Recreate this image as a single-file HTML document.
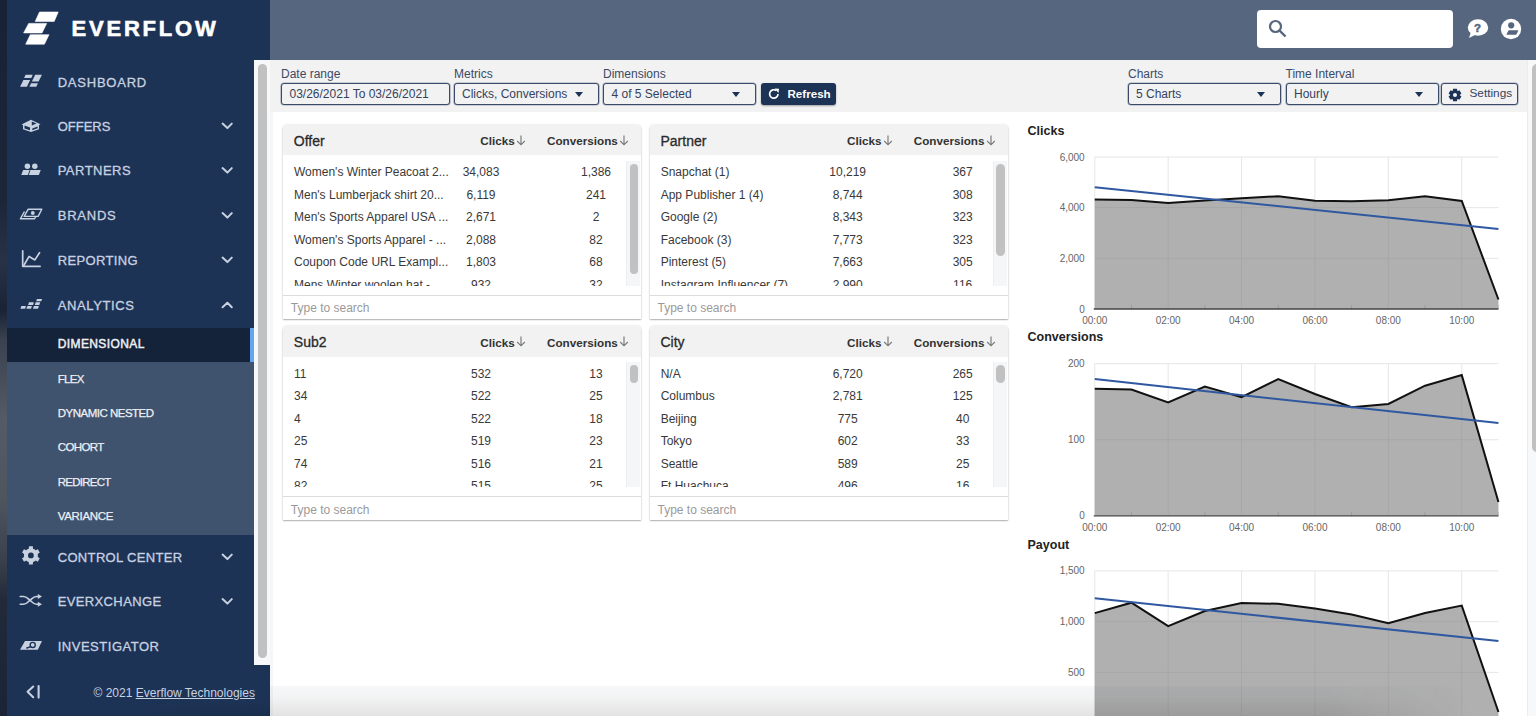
<!DOCTYPE html><html><head><meta charset="utf-8"><style>

*{box-sizing:border-box;margin:0;padding:0}
html,body{width:1536px;height:716px;overflow:hidden;background:#fff;font-family:"Liberation Sans",sans-serif;position:relative}
.a{position:absolute}
.t{position:absolute;white-space:nowrap;line-height:1}
#strip{left:0;top:0;width:7px;height:716px;background:linear-gradient(180deg,#172236 0px,#1b2639 200px,#283246 260px,#1a2336 310px,#3a4250 340px,#545b66 420px,#4e555f 500px,#3a414d 560px,#222a3a 600px,#1a2436 716px)}
#side{left:7px;top:0;width:263px;height:716px;background:#1d3355}
.nav{position:absolute;left:57.7px;font-size:13px;letter-spacing:0.55px;color:#c8d1e0;-webkit-text-stroke:0.3px #c8d1e0;white-space:nowrap;line-height:1}
.sub{position:absolute;left:57.7px;font-size:11.5px;color:#eef0f4;-webkit-text-stroke:0.25px #eef0f4;white-space:nowrap;line-height:1}
.chev{position:absolute;left:216px;width:12px;height:8px}
#hdr{left:270px;top:0;width:1266px;height:60px;background:#56667f}
#main{left:270px;top:60px;width:1257px;height:656px;background:#fff}
#fbar{left:270px;top:60px;width:1257px;height:52px;background:#f2f2f2}
.lbl{position:absolute;font-size:12px;color:#3b4a66;line-height:1;white-space:nowrap}
.inp{position:absolute;top:83px;height:22px;border:1px solid #3a4a68;box-shadow:0 0 0 0.6px rgba(58,74,104,.45);border-radius:3px;font-size:12px;color:#34425e;line-height:21px;padding-left:7.5px;white-space:nowrap;background:#f2f2f2}
.caret{position:absolute;top:7.5px;width:0;height:0;border-left:4.6px solid transparent;border-right:4.6px solid transparent;border-top:5.2px solid #1d3355}


.card{position:absolute;width:358px;height:194px;background:#fff;border-radius:4px 4px 0 0;box-shadow:0 1px 1.5px rgba(0,0,0,.28),0 0 2.5px rgba(0,0,0,.14);overflow:hidden}
.ch{position:absolute;left:0;top:0;width:358px;height:30.5px;background:#f2f2f2}
.ct{position:absolute;left:10.5px;top:9px;font-size:14px;color:#2a2a2a;-webkit-text-stroke:0.3px #2a2a2a;line-height:1;white-space:nowrap}
.hc{position:absolute;top:10.5px;font-size:11.7px;font-weight:bold;color:#333;line-height:1;white-space:nowrap}
.arr{position:absolute;top:10px;width:10px;height:12px}
.body{position:absolute;left:0;top:36px;width:358px;height:125px;overflow:hidden}
.r{position:absolute;font-size:12px;color:#393939;line-height:1;white-space:nowrap}
.nm{left:10.7px}
.cv{width:80px;text-align:center}
.trk{position:absolute;left:342.5px;top:36px;width:14px;height:125px;background:#f5f6f8;border-left:1px solid #eceef1}
.thm{position:absolute;left:346.3px;width:8.6px;background:#c1c1c1;border-radius:5px}
.srch{position:absolute;left:0;top:170px;width:358px;height:24px;border-top:1px solid #dcdcdc}
.ph{position:absolute;left:7.5px;top:6.5px;font-size:12px;color:#9a9a9a;line-height:1;white-space:nowrap}


#rtrk{left:1527px;top:60px;width:9px;height:656px;background:#f7f8fa;border-left:1px solid #ececec}
#rthm{left:1532px;top:63.6px;width:10px;height:388px;background:#c1c1c1;border-radius:5px}
#bov{left:270px;top:685.5px;width:1200px;height:31px;background:linear-gradient(180deg,rgba(40,60,100,.04) 0%,rgba(20,30,50,.05) 35%,rgba(0,0,0,.08) 65%,rgba(0,0,0,.115) 100%);-webkit-mask-image:linear-gradient(90deg,#000 0%,#000 88%,transparent 100%);border-top-right-radius:40px}

</style></head><body>
<div id="strip" class="a"></div>
<div id="side" class="a"></div>
<svg class="a" style="left:22px;top:11px" width="38" height="35" viewBox="0 0 38 35">
<polygon points="17.5,1 36.2,1 32.2,10.4 13.2,10.4" fill="#fff" stroke="#fff" stroke-width="0.6" stroke-linejoin="round"/>
<polygon points="6.7,12.4 24.7,12.4 20,21.9 1.65,21.9" fill="#fff" stroke="#fff" stroke-width="0.6" stroke-linejoin="round"/>
<polygon points="8.3,23.7 27,23.7 22.4,33.2 3.7,33.2" fill="#fff" stroke="#fff" stroke-width="0.6" stroke-linejoin="round"/>
</svg>
<div class="t" style="left:71.5px;top:18px;font-size:22px;font-weight:bold;color:#fff;letter-spacing:2.8px;-webkit-text-stroke:0.6px #fff">EVERFLOW</div>
<div class="nav" style="top:76px;letter-spacing:0.77px">DASHBOARD</div>
<div class="nav" style="top:119.5px;letter-spacing:0.0px">OFFERS</div>
<svg class="a" style="left:0;top:0" width="240" height="716" viewBox="0 0 240 716"><polyline points="222.55,123.60 227.4,128.10 231.8,123.60" fill="none" stroke="#c8d1e0" stroke-width="2" stroke-linecap="round" stroke-linejoin="round"/></svg>
<div class="nav" style="top:164px;letter-spacing:0.48px">PARTNERS</div>
<svg class="a" style="left:0;top:0" width="240" height="716" viewBox="0 0 240 716"><polyline points="222.55,168.10 227.4,172.60 231.8,168.10" fill="none" stroke="#c8d1e0" stroke-width="2" stroke-linecap="round" stroke-linejoin="round"/></svg>
<div class="nav" style="top:209px;letter-spacing:0.77px">BRANDS</div>
<svg class="a" style="left:0;top:0" width="240" height="716" viewBox="0 0 240 716"><polyline points="222.55,213.10 227.4,217.60 231.8,213.10" fill="none" stroke="#c8d1e0" stroke-width="2" stroke-linecap="round" stroke-linejoin="round"/></svg>
<div class="nav" style="top:253.5px;letter-spacing:0.37px">REPORTING</div>
<svg class="a" style="left:0;top:0" width="240" height="716" viewBox="0 0 240 716"><polyline points="222.55,257.60 227.4,262.10 231.8,257.60" fill="none" stroke="#c8d1e0" stroke-width="2" stroke-linecap="round" stroke-linejoin="round"/></svg>
<div class="nav" style="top:298.6px;letter-spacing:0.62px">ANALYTICS</div>
<svg class="a" style="left:0;top:0" width="240" height="716" viewBox="0 0 240 716"><polyline points="222.55,307.20 227.4,302.70 231.8,307.20" fill="none" stroke="#c8d1e0" stroke-width="2" stroke-linecap="round" stroke-linejoin="round"/></svg>
<div class="a" style="left:7px;top:328px;width:247px;height:34px;background:#15233a"></div>
<div class="a" style="left:250px;top:328px;width:4px;height:34px;background:#62a6f0"></div>
<div class="a" style="left:7px;top:362px;width:247px;height:173px;background:#3f526e"></div>
<div class="sub" style="top:337.7px;letter-spacing:0.4px;font-size:12px;-webkit-text-stroke:0.45px #eef0f4">DIMENSIONAL</div>
<div class="sub" style="top:373.8px;letter-spacing:-0.7px">FLEX</div>
<div class="sub" style="top:407.8px;letter-spacing:-0.5px">DYNAMIC NESTED</div>
<div class="sub" style="top:441.8px;letter-spacing:-0.6px">COHORT</div>
<div class="sub" style="top:476.8px;letter-spacing:-0.75px">REDIRECT</div>
<div class="sub" style="top:511.29999999999995px;letter-spacing:-0.3px">VARIANCE</div>
<div class="nav" style="top:550.5px;letter-spacing:0.34px">CONTROL CENTER</div>
<svg class="a" style="left:0;top:0" width="240" height="716" viewBox="0 0 240 716"><polyline points="222.55,554.60 227.4,559.10 231.8,554.60" fill="none" stroke="#c8d1e0" stroke-width="2" stroke-linecap="round" stroke-linejoin="round"/></svg>
<div class="nav" style="top:595px;letter-spacing:0.37px">EVERXCHANGE</div>
<svg class="a" style="left:0;top:0" width="240" height="716" viewBox="0 0 240 716"><polyline points="222.55,599.10 227.4,603.60 231.8,599.10" fill="none" stroke="#c8d1e0" stroke-width="2" stroke-linecap="round" stroke-linejoin="round"/></svg>
<div class="nav" style="top:640px;letter-spacing:0.52px">INVESTIGATOR</div>
<div class="t" style="left:93.5px;top:687px;font-size:12px;color:#c8d1e0">&copy; 2021 <span style="text-decoration:underline">Everflow Technologies</span></div>
<svg class="a" style="left:0;top:0" width="50" height="716" viewBox="0 0 50 716">
<g fill="#c8d1e0">
<polygon points="25.6,74.8 32.7,74.8 31.3,78.0 24.1,78.0"/>
<polygon points="35.2,74.8 41.9,74.8 38.6,81.6 31.9,81.6"/>
<polygon points="23.4,80.1 30.1,80.1 26.9,86.8 20.1,86.8"/>
<polygon points="31.1,83.3 37.9,83.3 36.3,86.8 29.4,86.8"/>
</g>
<path d="M21.5,124.5 L31,119.8 L40.5,124.3 L39,125 L39,129.2 L31,132 L23,129.2 L23,125 Z" fill="#c8d1e0"/>
<g fill="#1d3355">
<polygon points="24.5,125.6 30,127.6 30,130.3 24.5,128.4"/>
<polygon points="32.3,128.6 37.6,126.6 37.6,128.3 32.3,130.2"/>
<polygon points="31.8,121.6 36.5,123.5 31.8,125.4"/>
</g>
<g fill="#c8d1e0">
<circle cx="27.4" cy="166.2" r="2.75"/><circle cx="34.8" cy="166.2" r="2.75"/>
<polygon points="23.2,170.1 29.6,170.1 27.9,174.9 21.2,174.9"/>
<polygon points="30.4,170.1 40.8,170.1 38.8,174.9 28.9,174.9"/>
</g>
<g fill="none" stroke="#c8d1e0" stroke-width="1.4" stroke-linejoin="round">
<polygon points="28.2,209.2 41.8,209.2 38.1,216.4 24.2,216.4"/>
<path d="M24.5,211.5 L20.4,218.8 L34.4,218.8 L36,216.4"/>
</g>
<circle cx="32.8" cy="213" r="1.9" fill="#c8d1e0"/>
<g fill="none" stroke="#c8d1e0" stroke-width="1.7" stroke-linecap="round" stroke-linejoin="round">
<polyline points="22.7,250.8 22.7,266.3 40.1,266.3"/>
<polyline points="23.9,265.2 29.1,256.4 34.9,259.9 39.5,252.7"/>
</g>
<g fill="#c8d1e0">
<polygon points="21.4,306.1 25.9,306.1 25.1,308.8 20.4,308.8"/>
<polygon points="27.3,306.1 31.9,306.1 31.0,308.8 26.4,308.8"/>
<polygon points="33.9,306.1 38.9,306.1 38.0,308.8 32.9,308.8"/>
<polygon points="29.0,302.2 33.9,302.2 33.0,304.9 28.1,304.9"/>
<polygon points="35.7,302.2 40.2,302.2 39.3,304.9 34.8,304.9"/>
<polygon points="37.0,298.9 42.1,298.9 41.3,301.3 36.2,301.3"/>
</g>
<path fill="#c8d1e0" fill-rule="evenodd" d="M27.40,549.34 L28.80,548.72 L28.96,546.30 L32.84,546.30 L33.00,548.72 L34.40,549.34 L35.63,550.24 L37.81,549.17 L39.75,552.53 L37.73,553.88 L37.90,555.40 L37.73,556.92 L39.75,558.27 L37.81,561.63 L35.63,560.56 L34.40,561.46 L33.00,562.08 L32.84,564.50 L28.96,564.50 L28.80,562.08 L27.40,561.46 L26.17,560.56 L23.99,561.63 L22.05,558.27 L24.07,556.92 L23.90,555.40 L24.07,553.88 L22.05,552.53 L23.99,549.17 L26.17,550.24 Z M33.80,555.40 A2.9,2.9 0 1 0 28.00,555.40 A2.9,2.9 0 1 0 33.80,555.40 Z"/>
<g fill="none" stroke="#c8d1e0" stroke-width="1.6" stroke-linecap="round">
<path d="M20.2,596.5 L23.5,596.5 C27,596.5 28,599 30,600.3 C32,601.6 33,604.2 36.5,604.2 L38.5,604.2"/>
<path d="M20.2,604.2 L23.5,604.2 C27,604.2 28,601.6 30,600.3 C32,599 33,596.5 36.5,596.5 L38.5,596.5"/>
</g>
<g fill="#c8d1e0">
<polygon points="37.8,594 42,596.5 37.8,599"/><polygon points="37.8,601.7 42,604.2 37.8,606.7"/>
</g>
<polygon points="25,640.9 42,640.9 37.8,649.8 20,649.8" fill="#c8d1e0"/>
<circle cx="32.7" cy="644.9" r="2.55" fill="none" stroke="#1d3355" stroke-width="1.4"/>
<line x1="30.8" y1="646.6" x2="26.9" y2="648" stroke="#1d3355" stroke-width="1.5" stroke-linecap="round"/>
<g fill="none" stroke="#c8d1e0" stroke-width="2.1" stroke-linecap="round" stroke-linejoin="round">
<polyline points="33.2,686.5 27.6,691.8 33.2,697.2"/>
<line x1="38.6" y1="686" x2="38.6" y2="697.6"/>
</g>
</svg>
<div class="a" style="left:254px;top:60px;width:16px;height:605px;background:#f7f8fa"></div>
<div class="a" style="left:258px;top:64px;width:8.5px;height:594px;background:#c1c1c1;border-radius:5px"></div>
<div id="hdr" class="a"></div>
<div class="a" style="left:1257px;top:10px;width:196px;height:38px;background:#fff;border-radius:4px"></div>
<svg class="a" style="left:1268px;top:19px" width="20" height="20" viewBox="0 0 20 20"><circle cx="7.5" cy="7.5" r="5.5" fill="none" stroke="#56667f" stroke-width="2.2"/><line x1="11.5" y1="11.5" x2="17.5" y2="17.5" stroke="#56667f" stroke-width="2.4"/></svg>
<svg class="a" style="left:1466px;top:18px" width="23" height="21" viewBox="0 0 23 21"><ellipse cx="12" cy="9.5" rx="10.2" ry="8.3" fill="#fff"/><polygon points="5,14 3,20 11,16" fill="#fff"/><text x="11.5" y="13.8" text-anchor="middle" font-family="Liberation Sans" font-weight="bold" font-size="11.5" fill="#56667f" stroke="#56667f" stroke-width="0.5">?</text></svg>
<svg class="a" style="left:1500px;top:18px" width="22" height="22" viewBox="0 0 22 22"><circle cx="11" cy="11" r="10.2" fill="#fff"/><circle cx="11.2" cy="7.3" r="3.1" fill="#56667f"/><polygon points="8.6,12.2 18.4,12.2 16.2,16.8 6.3,16.8" fill="#56667f"/></svg>
<div id="main" class="a"></div>
<div id="fbar" class="a"></div>
<div class="a" style="left:270px;top:112px;width:3px;height:604px;background:#f5f6f8"></div>
<div class="lbl" style="left:281px;top:68px">Date range</div>
<div class="inp" style="left:281px;width:169px">03/26/2021 To 03/26/2021</div>
<div class="lbl" style="left:454px;top:68px">Metrics</div>
<div class="inp" style="left:453.5px;width:145.5px">Clicks, Conversions<div class="caret" style="left:120px"></div></div>
<div class="lbl" style="left:603px;top:68px">Dimensions</div>
<div class="inp" style="left:603px;width:153px">4 of 5 Selected<div class="caret" style="left:128px"></div></div>
<div class="a" style="left:761px;top:83px;width:75px;height:22px;background:#1d3355;border-radius:3px;box-shadow:0 1px 2px rgba(0,0,0,.35)"></div>
<svg class="a" style="left:768px;top:88px" width="12" height="12" viewBox="0 0 12 12"><path d="M10,6 A4.2,4.2 0 1 1 8.3,2.6" fill="none" stroke="#fff" stroke-width="1.7"/><polygon points="6.5,0.5 11,0.8 10.5,5" fill="#fff"/></svg>
<div class="t" style="left:787.5px;top:88px;font-size:11.6px;font-weight:bold;color:#fff">Refresh</div>
<div class="lbl" style="left:1128px;top:68px">Charts</div>
<div class="inp" style="left:1127.5px;width:153.5px">5 Charts<div class="caret" style="left:128px"></div></div>
<div class="lbl" style="left:1285.5px;top:68px">Time Interval</div>
<div class="inp" style="left:1285.5px;width:153px">Hourly<div class="caret" style="left:128px"></div></div>
<div class="inp" style="left:1440.5px;width:77.5px;padding-left:28px;font-size:11.8px;line-height:19.5px">Settings</div>
<svg class="a" style="left:1448px;top:87.5px" width="14" height="14" viewBox="0 0 20 20"><path fill="#1d3355" fill-rule="evenodd" d="M6.50,3.94 L6.96,3.70 L7.13,1.05 L12.87,1.05 L13.04,3.70 L13.50,3.94 L13.94,4.21 L16.32,3.04 L19.19,8.01 L16.98,9.48 L17.00,10.00 L16.98,10.52 L19.19,11.99 L16.32,16.96 L13.94,15.79 L13.50,16.06 L13.04,16.30 L12.87,18.95 L7.13,18.95 L6.96,16.30 L6.50,16.06 L6.06,15.79 L3.68,16.96 L0.81,11.99 L3.02,10.52 L3.00,10.00 L3.02,9.48 L0.81,8.01 L3.68,3.04 L6.06,4.21 Z M12.90,10.00 A2.9,2.9 0 1 0 7.10,10.00 A2.9,2.9 0 1 0 12.90,10.00 Z"/></svg>
<div class="card" style="left:283.3px;top:124.5px">
<div class="ch"></div>
<div class="ct">Offer</div>
<div class="hc" style="right:126.5px">Clicks</div>
<svg class="arr" style="left:232.5px" width="10" height="12" viewBox="0 0 10 12"><path d="M5,0.5 L5,10 M1.2,6 L5,9.8 L8.8,6" fill="none" stroke="#777" stroke-width="1.15"/></svg>
<div class="hc" style="right:23.5px">Conversions</div>
<svg class="arr" style="left:336px" width="10" height="12" viewBox="0 0 10 12"><path d="M5,0.5 L5,10 M1.2,6 L5,9.8 L8.8,6" fill="none" stroke="#777" stroke-width="1.15"/></svg>
<div class="body">
<div class="r nm" style="top:5.5px">Women's Winter Peacoat 2...</div>
<div class="r cv" style="left:157.7px;top:5.5px">34,083</div>
<div class="r cv" style="left:272.7px;top:5.5px">1,386</div>
<div class="r nm" style="top:28.0px">Men's Lumberjack shirt 20...</div>
<div class="r cv" style="left:157.7px;top:28.0px">6,119</div>
<div class="r cv" style="left:272.7px;top:28.0px">241</div>
<div class="r nm" style="top:50.5px">Men's Sports Apparel USA ...</div>
<div class="r cv" style="left:157.7px;top:50.5px">2,671</div>
<div class="r cv" style="left:272.7px;top:50.5px">2</div>
<div class="r nm" style="top:73.0px">Women's Sports Apparel - ...</div>
<div class="r cv" style="left:157.7px;top:73.0px">2,088</div>
<div class="r cv" style="left:272.7px;top:73.0px">82</div>
<div class="r nm" style="top:95.5px">Coupon Code URL Exampl...</div>
<div class="r cv" style="left:157.7px;top:95.5px">1,803</div>
<div class="r cv" style="left:272.7px;top:95.5px">68</div>
<div class="r nm" style="top:118.0px">Mens Winter woolen hat -</div>
<div class="r cv" style="left:157.7px;top:118.0px">932</div>
<div class="r cv" style="left:272.7px;top:118.0px">32</div>
</div>
<div class="trk"></div>
<div class="thm" style="top:39.5px;height:109.5px"></div>
<div class="srch"><div class="ph">Type to search</div></div>
</div>
<div class="card" style="left:650px;top:124.5px">
<div class="ch"></div>
<div class="ct">Partner</div>
<div class="hc" style="right:126.5px">Clicks</div>
<svg class="arr" style="left:232.5px" width="10" height="12" viewBox="0 0 10 12"><path d="M5,0.5 L5,10 M1.2,6 L5,9.8 L8.8,6" fill="none" stroke="#777" stroke-width="1.15"/></svg>
<div class="hc" style="right:23.5px">Conversions</div>
<svg class="arr" style="left:336px" width="10" height="12" viewBox="0 0 10 12"><path d="M5,0.5 L5,10 M1.2,6 L5,9.8 L8.8,6" fill="none" stroke="#777" stroke-width="1.15"/></svg>
<div class="body">
<div class="r nm" style="top:5.5px">Snapchat (1)</div>
<div class="r cv" style="left:157.7px;top:5.5px">10,219</div>
<div class="r cv" style="left:272.7px;top:5.5px">367</div>
<div class="r nm" style="top:28.0px">App Publisher 1 (4)</div>
<div class="r cv" style="left:157.7px;top:28.0px">8,744</div>
<div class="r cv" style="left:272.7px;top:28.0px">308</div>
<div class="r nm" style="top:50.5px">Google (2)</div>
<div class="r cv" style="left:157.7px;top:50.5px">8,343</div>
<div class="r cv" style="left:272.7px;top:50.5px">323</div>
<div class="r nm" style="top:73.0px">Facebook (3)</div>
<div class="r cv" style="left:157.7px;top:73.0px">7,773</div>
<div class="r cv" style="left:272.7px;top:73.0px">323</div>
<div class="r nm" style="top:95.5px">Pinterest (5)</div>
<div class="r cv" style="left:157.7px;top:95.5px">7,663</div>
<div class="r cv" style="left:272.7px;top:95.5px">305</div>
<div class="r nm" style="top:118.0px">Instagram Influencer (7)</div>
<div class="r cv" style="left:157.7px;top:118.0px">2,990</div>
<div class="r cv" style="left:272.7px;top:118.0px">116</div>
</div>
<div class="trk"></div>
<div class="thm" style="top:39.5px;height:92px"></div>
<div class="srch"><div class="ph">Type to search</div></div>
</div>
<div class="card" style="left:283.3px;top:326px">
<div class="ch"></div>
<div class="ct">Sub2</div>
<div class="hc" style="right:126.5px">Clicks</div>
<svg class="arr" style="left:232.5px" width="10" height="12" viewBox="0 0 10 12"><path d="M5,0.5 L5,10 M1.2,6 L5,9.8 L8.8,6" fill="none" stroke="#777" stroke-width="1.15"/></svg>
<div class="hc" style="right:23.5px">Conversions</div>
<svg class="arr" style="left:336px" width="10" height="12" viewBox="0 0 10 12"><path d="M5,0.5 L5,10 M1.2,6 L5,9.8 L8.8,6" fill="none" stroke="#777" stroke-width="1.15"/></svg>
<div class="body">
<div class="r nm" style="top:5.5px">11</div>
<div class="r cv" style="left:157.7px;top:5.5px">532</div>
<div class="r cv" style="left:272.7px;top:5.5px">13</div>
<div class="r nm" style="top:28.0px">34</div>
<div class="r cv" style="left:157.7px;top:28.0px">522</div>
<div class="r cv" style="left:272.7px;top:28.0px">25</div>
<div class="r nm" style="top:50.5px">4</div>
<div class="r cv" style="left:157.7px;top:50.5px">522</div>
<div class="r cv" style="left:272.7px;top:50.5px">18</div>
<div class="r nm" style="top:73.0px">25</div>
<div class="r cv" style="left:157.7px;top:73.0px">519</div>
<div class="r cv" style="left:272.7px;top:73.0px">23</div>
<div class="r nm" style="top:95.5px">74</div>
<div class="r cv" style="left:157.7px;top:95.5px">516</div>
<div class="r cv" style="left:272.7px;top:95.5px">21</div>
<div class="r nm" style="top:118.0px">82</div>
<div class="r cv" style="left:157.7px;top:118.0px">515</div>
<div class="r cv" style="left:272.7px;top:118.0px">25</div>
</div>
<div class="trk"></div>
<div class="thm" style="top:38.5px;height:18.5px"></div>
<div class="srch"><div class="ph">Type to search</div></div>
</div>
<div class="card" style="left:650px;top:326px">
<div class="ch"></div>
<div class="ct">City</div>
<div class="hc" style="right:126.5px">Clicks</div>
<svg class="arr" style="left:232.5px" width="10" height="12" viewBox="0 0 10 12"><path d="M5,0.5 L5,10 M1.2,6 L5,9.8 L8.8,6" fill="none" stroke="#777" stroke-width="1.15"/></svg>
<div class="hc" style="right:23.5px">Conversions</div>
<svg class="arr" style="left:336px" width="10" height="12" viewBox="0 0 10 12"><path d="M5,0.5 L5,10 M1.2,6 L5,9.8 L8.8,6" fill="none" stroke="#777" stroke-width="1.15"/></svg>
<div class="body">
<div class="r nm" style="top:5.5px">N/A</div>
<div class="r cv" style="left:157.7px;top:5.5px">6,720</div>
<div class="r cv" style="left:272.7px;top:5.5px">265</div>
<div class="r nm" style="top:28.0px">Columbus</div>
<div class="r cv" style="left:157.7px;top:28.0px">2,781</div>
<div class="r cv" style="left:272.7px;top:28.0px">125</div>
<div class="r nm" style="top:50.5px">Beijing</div>
<div class="r cv" style="left:157.7px;top:50.5px">775</div>
<div class="r cv" style="left:272.7px;top:50.5px">40</div>
<div class="r nm" style="top:73.0px">Tokyo</div>
<div class="r cv" style="left:157.7px;top:73.0px">602</div>
<div class="r cv" style="left:272.7px;top:73.0px">33</div>
<div class="r nm" style="top:95.5px">Seattle</div>
<div class="r cv" style="left:157.7px;top:95.5px">589</div>
<div class="r cv" style="left:272.7px;top:95.5px">25</div>
<div class="r nm" style="top:118.0px">Ft Huachuca</div>
<div class="r cv" style="left:157.7px;top:118.0px">496</div>
<div class="r cv" style="left:272.7px;top:118.0px">16</div>
</div>
<div class="trk"></div>
<div class="thm" style="top:38.5px;height:18.5px"></div>
<div class="srch"><div class="ph">Type to search</div></div>
</div>
<svg class="a" style="left:0;top:0" width="1536" height="716" viewBox="0 0 1536 716">
<line x1="1094.75" y1="157.00" x2="1498.45" y2="157.00" stroke="#e6e6e6" stroke-width="1"/>
<line x1="1094.75" y1="207.67" x2="1498.45" y2="207.67" stroke="#e6e6e6" stroke-width="1"/>
<line x1="1094.75" y1="258.33" x2="1498.45" y2="258.33" stroke="#e6e6e6" stroke-width="1"/>
<line x1="1094.75" y1="157" x2="1094.75" y2="309" stroke="#e6e6e6" stroke-width="1"/>
<line x1="1168.15" y1="157" x2="1168.15" y2="309" stroke="#e6e6e6" stroke-width="1"/>
<line x1="1241.55" y1="157" x2="1241.55" y2="309" stroke="#e6e6e6" stroke-width="1"/>
<line x1="1314.95" y1="157" x2="1314.95" y2="309" stroke="#e6e6e6" stroke-width="1"/>
<line x1="1388.35" y1="157" x2="1388.35" y2="309" stroke="#e6e6e6" stroke-width="1"/>
<line x1="1461.75" y1="157" x2="1461.75" y2="309" stroke="#e6e6e6" stroke-width="1"/>
<polygon points="1094.75,309 1094.75,199.4 1131.45,199.9 1168.15,203 1204.85,200.4 1241.55,198.2 1278.25,196.3 1314.95,200.75 1351.65,201.3 1388.35,200.25 1425.05,196.2 1461.75,201 1498.45,299.5 1498.45,309" fill="rgba(128,128,128,0.625)"/>
<polyline points="1094.75,199.4 1131.45,199.9 1168.15,203 1204.85,200.4 1241.55,198.2 1278.25,196.3 1314.95,200.75 1351.65,201.3 1388.35,200.25 1425.05,196.2 1461.75,201 1498.45,299.5" fill="none" stroke="#111" stroke-width="2" stroke-linejoin="miter"/>
<line x1="1094.75" y1="187.3" x2="1498.45" y2="228.9" stroke="#2f58a0" stroke-width="2"/>
<line x1="1093.75" y1="309" x2="1498.45" y2="309" stroke="#444" stroke-width="1.3"/>
<line x1="1131.45" y1="305" x2="1131.45" y2="309" stroke="rgba(0,0,0,0.12)" stroke-width="1"/>
<line x1="1204.85" y1="305" x2="1204.85" y2="309" stroke="rgba(0,0,0,0.12)" stroke-width="1"/>
<line x1="1278.25" y1="305" x2="1278.25" y2="309" stroke="rgba(0,0,0,0.12)" stroke-width="1"/>
<line x1="1351.65" y1="305" x2="1351.65" y2="309" stroke="rgba(0,0,0,0.12)" stroke-width="1"/>
<line x1="1425.05" y1="305" x2="1425.05" y2="309" stroke="rgba(0,0,0,0.12)" stroke-width="1"/>
<line x1="1498.45" y1="305" x2="1498.45" y2="309" stroke="rgba(0,0,0,0.12)" stroke-width="1"/>
<text x="1084.7" y="160.50" text-anchor="end" font-family="Liberation Sans" font-size="10" fill="#666">6,000</text>
<text x="1084.7" y="211.17" text-anchor="end" font-family="Liberation Sans" font-size="10" fill="#666">4,000</text>
<text x="1084.7" y="261.83" text-anchor="end" font-family="Liberation Sans" font-size="10" fill="#666">2,000</text>
<text x="1084.7" y="312.50" text-anchor="end" font-family="Liberation Sans" font-size="10" fill="#666">0</text>
<text x="1094.75" y="323.70" text-anchor="middle" font-family="Liberation Sans" font-size="10" fill="#666">00:00</text>
<text x="1168.15" y="323.70" text-anchor="middle" font-family="Liberation Sans" font-size="10" fill="#666">02:00</text>
<text x="1241.55" y="323.70" text-anchor="middle" font-family="Liberation Sans" font-size="10" fill="#666">04:00</text>
<text x="1314.95" y="323.70" text-anchor="middle" font-family="Liberation Sans" font-size="10" fill="#666">06:00</text>
<text x="1388.35" y="323.70" text-anchor="middle" font-family="Liberation Sans" font-size="10" fill="#666">08:00</text>
<text x="1461.75" y="323.70" text-anchor="middle" font-family="Liberation Sans" font-size="10" fill="#666">10:00</text>
<text x="1027.5" y="135.0" font-family="Liberation Sans" font-weight="bold" font-size="12.5" fill="#222">Clicks</text>
<line x1="1094.75" y1="363.70" x2="1498.45" y2="363.70" stroke="#e6e6e6" stroke-width="1"/>
<line x1="1094.75" y1="439.75" x2="1498.45" y2="439.75" stroke="#e6e6e6" stroke-width="1"/>
<line x1="1094.75" y1="363.7" x2="1094.75" y2="515.8" stroke="#e6e6e6" stroke-width="1"/>
<line x1="1168.15" y1="363.7" x2="1168.15" y2="515.8" stroke="#e6e6e6" stroke-width="1"/>
<line x1="1241.55" y1="363.7" x2="1241.55" y2="515.8" stroke="#e6e6e6" stroke-width="1"/>
<line x1="1314.95" y1="363.7" x2="1314.95" y2="515.8" stroke="#e6e6e6" stroke-width="1"/>
<line x1="1388.35" y1="363.7" x2="1388.35" y2="515.8" stroke="#e6e6e6" stroke-width="1"/>
<line x1="1461.75" y1="363.7" x2="1461.75" y2="515.8" stroke="#e6e6e6" stroke-width="1"/>
<polygon points="1094.75,515.8 1094.75,388.7 1131.45,389.6 1168.15,402.5 1204.85,386.6 1241.55,397.1 1278.25,379.1 1314.95,394 1351.65,407.3 1388.35,404 1425.05,385.7 1461.75,375.1 1498.45,502 1498.45,515.8" fill="rgba(128,128,128,0.625)"/>
<polyline points="1094.75,388.7 1131.45,389.6 1168.15,402.5 1204.85,386.6 1241.55,397.1 1278.25,379.1 1314.95,394 1351.65,407.3 1388.35,404 1425.05,385.7 1461.75,375.1 1498.45,502" fill="none" stroke="#111" stroke-width="2" stroke-linejoin="miter"/>
<line x1="1094.75" y1="379.1" x2="1498.45" y2="423.1" stroke="#2f58a0" stroke-width="2"/>
<line x1="1093.75" y1="515.8" x2="1498.45" y2="515.8" stroke="#444" stroke-width="1.3"/>
<line x1="1131.45" y1="511.79999999999995" x2="1131.45" y2="515.8" stroke="rgba(0,0,0,0.12)" stroke-width="1"/>
<line x1="1204.85" y1="511.79999999999995" x2="1204.85" y2="515.8" stroke="rgba(0,0,0,0.12)" stroke-width="1"/>
<line x1="1278.25" y1="511.79999999999995" x2="1278.25" y2="515.8" stroke="rgba(0,0,0,0.12)" stroke-width="1"/>
<line x1="1351.65" y1="511.79999999999995" x2="1351.65" y2="515.8" stroke="rgba(0,0,0,0.12)" stroke-width="1"/>
<line x1="1425.05" y1="511.79999999999995" x2="1425.05" y2="515.8" stroke="rgba(0,0,0,0.12)" stroke-width="1"/>
<line x1="1498.45" y1="511.79999999999995" x2="1498.45" y2="515.8" stroke="rgba(0,0,0,0.12)" stroke-width="1"/>
<text x="1084.7" y="367.20" text-anchor="end" font-family="Liberation Sans" font-size="10" fill="#666">200</text>
<text x="1084.7" y="443.25" text-anchor="end" font-family="Liberation Sans" font-size="10" fill="#666">100</text>
<text x="1084.7" y="519.30" text-anchor="end" font-family="Liberation Sans" font-size="10" fill="#666">0</text>
<text x="1094.75" y="531.30" text-anchor="middle" font-family="Liberation Sans" font-size="10" fill="#666">00:00</text>
<text x="1168.15" y="531.30" text-anchor="middle" font-family="Liberation Sans" font-size="10" fill="#666">02:00</text>
<text x="1241.55" y="531.30" text-anchor="middle" font-family="Liberation Sans" font-size="10" fill="#666">04:00</text>
<text x="1314.95" y="531.30" text-anchor="middle" font-family="Liberation Sans" font-size="10" fill="#666">06:00</text>
<text x="1388.35" y="531.30" text-anchor="middle" font-family="Liberation Sans" font-size="10" fill="#666">08:00</text>
<text x="1461.75" y="531.30" text-anchor="middle" font-family="Liberation Sans" font-size="10" fill="#666">10:00</text>
<text x="1027.5" y="341.0" font-family="Liberation Sans" font-weight="bold" font-size="12.5" fill="#222">Conversions</text>
<line x1="1094.75" y1="570.90" x2="1498.45" y2="570.90" stroke="#e6e6e6" stroke-width="1"/>
<line x1="1094.75" y1="621.63" x2="1498.45" y2="621.63" stroke="#e6e6e6" stroke-width="1"/>
<line x1="1094.75" y1="672.37" x2="1498.45" y2="672.37" stroke="#e6e6e6" stroke-width="1"/>
<line x1="1094.75" y1="570.9" x2="1094.75" y2="723.1" stroke="#e6e6e6" stroke-width="1"/>
<line x1="1168.15" y1="570.9" x2="1168.15" y2="723.1" stroke="#e6e6e6" stroke-width="1"/>
<line x1="1241.55" y1="570.9" x2="1241.55" y2="723.1" stroke="#e6e6e6" stroke-width="1"/>
<line x1="1314.95" y1="570.9" x2="1314.95" y2="723.1" stroke="#e6e6e6" stroke-width="1"/>
<line x1="1388.35" y1="570.9" x2="1388.35" y2="723.1" stroke="#e6e6e6" stroke-width="1"/>
<line x1="1461.75" y1="570.9" x2="1461.75" y2="723.1" stroke="#e6e6e6" stroke-width="1"/>
<polygon points="1094.75,723.1 1094.75,613.1 1131.45,602.7 1168.15,626.1 1204.85,611 1241.55,603 1278.25,603.8 1314.95,608.4 1351.65,614.5 1388.35,623.3 1425.05,613 1461.75,605.6 1498.45,712 1498.45,723.1" fill="rgba(128,128,128,0.625)"/>
<polyline points="1094.75,613.1 1131.45,602.7 1168.15,626.1 1204.85,611 1241.55,603 1278.25,603.8 1314.95,608.4 1351.65,614.5 1388.35,623.3 1425.05,613 1461.75,605.6 1498.45,712" fill="none" stroke="#111" stroke-width="2" stroke-linejoin="miter"/>
<line x1="1094.75" y1="598.3" x2="1498.45" y2="641.1" stroke="#2f58a0" stroke-width="2"/>
<line x1="1093.75" y1="723.1" x2="1498.45" y2="723.1" stroke="#444" stroke-width="1.3"/>
<line x1="1131.45" y1="719.1" x2="1131.45" y2="723.1" stroke="rgba(0,0,0,0.12)" stroke-width="1"/>
<line x1="1204.85" y1="719.1" x2="1204.85" y2="723.1" stroke="rgba(0,0,0,0.12)" stroke-width="1"/>
<line x1="1278.25" y1="719.1" x2="1278.25" y2="723.1" stroke="rgba(0,0,0,0.12)" stroke-width="1"/>
<line x1="1351.65" y1="719.1" x2="1351.65" y2="723.1" stroke="rgba(0,0,0,0.12)" stroke-width="1"/>
<line x1="1425.05" y1="719.1" x2="1425.05" y2="723.1" stroke="rgba(0,0,0,0.12)" stroke-width="1"/>
<line x1="1498.45" y1="719.1" x2="1498.45" y2="723.1" stroke="rgba(0,0,0,0.12)" stroke-width="1"/>
<text x="1084.7" y="574.40" text-anchor="end" font-family="Liberation Sans" font-size="10" fill="#666">1,500</text>
<text x="1084.7" y="625.13" text-anchor="end" font-family="Liberation Sans" font-size="10" fill="#666">1,000</text>
<text x="1084.7" y="675.87" text-anchor="end" font-family="Liberation Sans" font-size="10" fill="#666">500</text>
<text x="1084.7" y="726.60" text-anchor="end" font-family="Liberation Sans" font-size="10" fill="#666">0</text>
<text x="1094.75" y="737.50" text-anchor="middle" font-family="Liberation Sans" font-size="10" fill="#666">00:00</text>
<text x="1168.15" y="737.50" text-anchor="middle" font-family="Liberation Sans" font-size="10" fill="#666">02:00</text>
<text x="1241.55" y="737.50" text-anchor="middle" font-family="Liberation Sans" font-size="10" fill="#666">04:00</text>
<text x="1314.95" y="737.50" text-anchor="middle" font-family="Liberation Sans" font-size="10" fill="#666">06:00</text>
<text x="1388.35" y="737.50" text-anchor="middle" font-family="Liberation Sans" font-size="10" fill="#666">08:00</text>
<text x="1461.75" y="737.50" text-anchor="middle" font-family="Liberation Sans" font-size="10" fill="#666">10:00</text>
<text x="1027.5" y="548.5" font-family="Liberation Sans" font-weight="bold" font-size="12.5" fill="#222">Payout</text>
</svg>
<div id="rtrk" class="a"></div><div id="rthm" class="a"></div>
<div id="bov" class="a"></div>
<div class="a" style="left:120px;top:696px;width:150px;height:20px;background:radial-gradient(ellipse 160px 22px at 150px 26px,rgba(10,20,40,.22),rgba(10,20,40,0) 100%)"></div>
</body></html>
